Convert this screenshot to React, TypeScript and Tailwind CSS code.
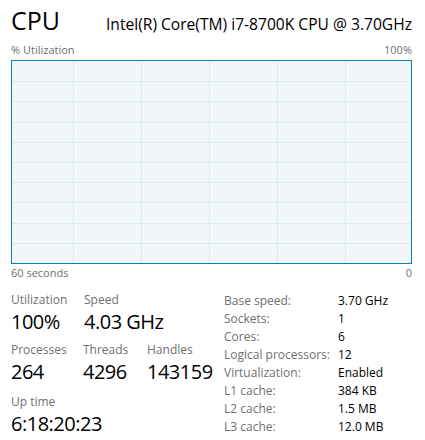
const rightRows: [string, string][] = [
  ['Base speed:', '3.70 GHz'],
  ['Sockets:', '1'],
  ['Cores:', '6'],
  ['Logical processors:', '12'],
  ['Virtualization:', 'Enabled'],
  ['L1 cache:', '384 KB'],
  ['L2 cache:', '1.5 MB'],
  ['L3 cache:', '12.0 MB'],
];

function Stat({ label, value, w }: { label: string; value: string; w: string }) {
  return (
    <div className={w + ' whitespace-nowrap'}>
      <div className="text-[12px] leading-[16px] text-[#707070]">{label}</div>
      <div className="text-[20px] leading-[28px] tracking-[-0.5px] text-black">{value}</div>
    </div>
  );
}

function UsageGraph() {
  const cols = [61, 129, 197, 265, 333];
  const rows = [1, 2, 3, 4, 5, 6, 7, 8, 9].map((i) => i * 20.2);
  return (
    <div className="h-[204px] border border-[#117dbb] bg-[#f1f6fa]">
      <svg width="100%" height="100%" viewBox="0 0 399 202" preserveAspectRatio="none">
        {cols.map((x) => (
          <line key={x} x1={x + 0.5} y1={0} x2={x + 0.5} y2={202} stroke="#d9eaf4" strokeWidth={1} />
        ))}
        {rows.map((y) => (
          <line key={y} x1={0} y1={Math.round(y) + 0.5} x2={399} y2={Math.round(y) + 0.5} stroke="#d9eaf4" strokeWidth={1} />
        ))}
      </svg>
    </div>
  );
}

export default function App() {
  return (
    <div className="w-[425px] h-[440px] bg-white pl-[11px] pr-[13px] font-['Open_Sans',sans-serif] text-black overflow-hidden">
      {/* header */}
      <div className="flex items-baseline justify-between h-[40px] pt-[4px]">
        <span className="text-[25px] leading-[32px]">CPU</span>
        <span className="text-[15.6px] leading-[20px] whitespace-nowrap">Intel(R) Core(TM) i7-8700K CPU @ 3.70GHz</span>
      </div>

      <div className="flex justify-between text-[11px] leading-[20px] text-[#707070]">
        <span>% Utilization</span>
        <span>100%</span>
      </div>

      <UsageGraph />

      <div className="flex justify-between text-[11px] leading-[18px] text-[#707070]">
        <span>60 seconds</span>
        <span>0</span>
      </div>

      {/* stats */}
      <div className="flex mt-[10px]">
        <div className="w-[213px]">
          <div className="flex h-[50px]">
            <Stat label="Utilization" value="100%" w="w-[73px]" />
            <Stat label="Speed" value="4.03 GHz" w="w-[63px]" />
          </div>
          <div className="flex h-[52px]">
            <Stat label="Processes" value="264" w="w-[72px]" />
            <Stat label="Threads" value="4296" w="w-[64px]" />
            <Stat label="Handles" value="143159" w="w-[70px]" />
          </div>
          <Stat label="Up time" value="6:18:20:23" w="w-[150px]" />
        </div>
        <div className="flex-1">
          {rightRows.map(([k, v]) => (
            <div key={k} className="flex h-[18px] items-center text-[12px] whitespace-nowrap">
              <span className="w-[114px] text-[#707070]">{k}</span>
              <span className="text-black">{v}</span>
            </div>
          ))}
        </div>
      </div>
    </div>
  );
}
